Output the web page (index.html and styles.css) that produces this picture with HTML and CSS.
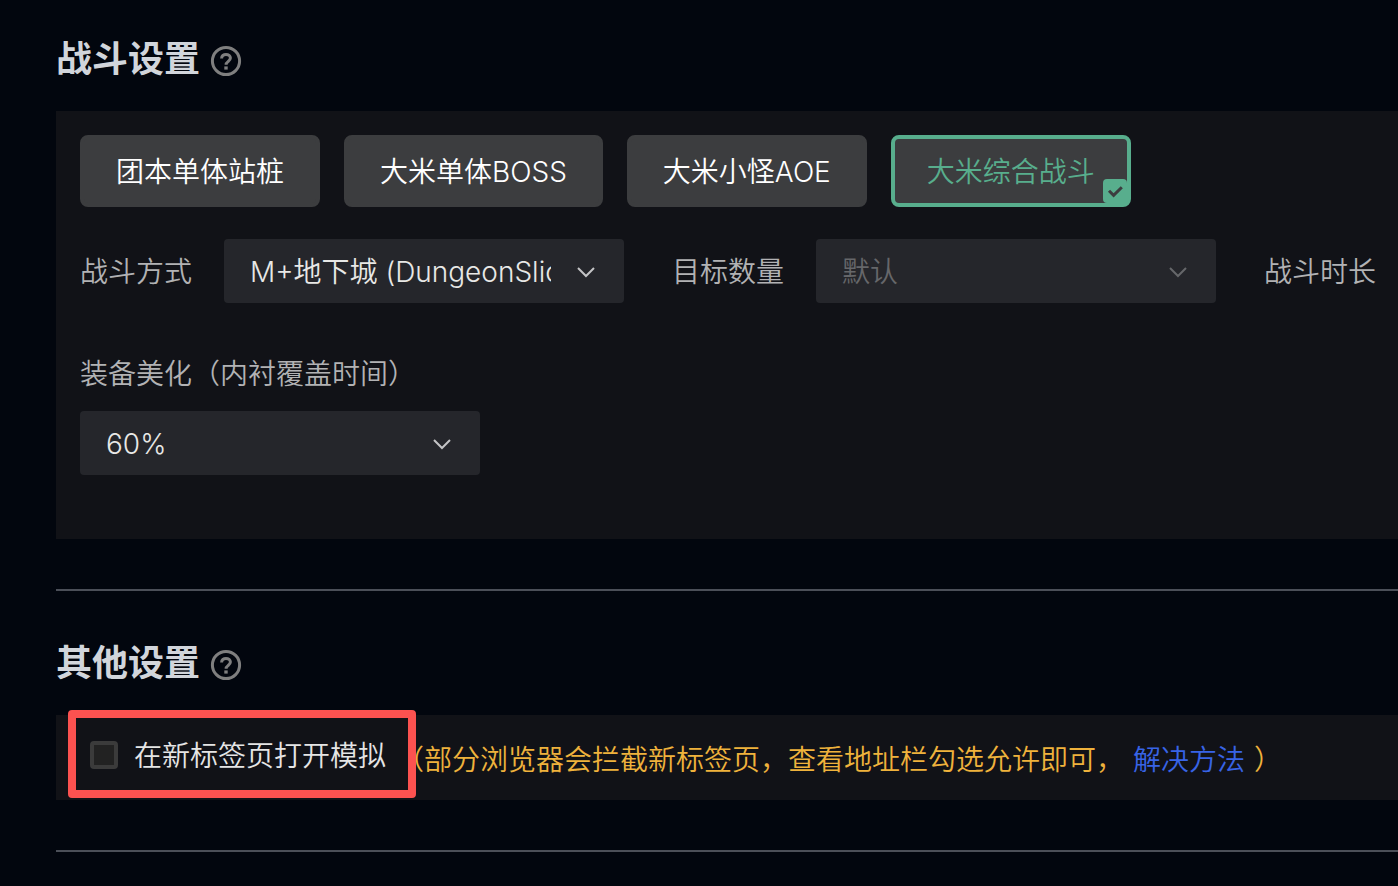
FILE: index.html
```html
<!DOCTYPE html>
<html lang="zh-CN">

<head>
    <meta charset="UTF-8">
    <meta name="viewport" content="width=device-width, initial-scale=1.0">
    <title>战斗设置</title>
    <link rel="stylesheet" href="styles.css">
</head>

<body>
    <main class="settings">
        <section class="section">
            <div class="section-title">
                <h2>战斗设置</h2>
                <svg class="help-icon" viewBox="0 0 32 32" aria-hidden="true">
                    <circle cx="16" cy="16" r="13.6" />
                    <path d="M11.6 13.4C11.6 10.9 13.5 9.4 16 9.4s4.4 1.5 4.4 3.7c0 1.8-1.2 2.6-2.4 3.5-1.1.8-1.9 1.4-1.9 3.2" />
                    <rect x="14.3" y="21.4" width="3.4" height="3.2" />
                </svg>
            </div>

            <div class="panel">
                <div class="preset-row">
                    <button type="button" class="preset">团本单体站桩</button>
                    <button type="button" class="preset">大米单体BOSS</button>
                    <button type="button" class="preset">大米小怪AOE</button>
                    <button type="button" class="preset active">大米综合战斗
                        <svg class="preset-check" viewBox="0 0 24 24" aria-hidden="true">
                            <path d="M6 11.8l4.6 4.5 8.2-8.1" />
                        </svg>
                    </button>
                </div>

                <div class="field-row">
                    <div class="field">
                        <label for="fightStyle">战斗方式</label>
                        <div class="select">
                            <select id="fightStyle">
                                <option>M+地下城 (DungeonSlice)</option>
                            </select>
                            <svg viewBox="0 0 20 12" aria-hidden="true"><path d="M2 2l8 8 8-8" /></svg>
                        </div>
                    </div>
                    <div class="field">
                        <label for="targetCount">目标数量</label>
                        <div class="select">
                            <select id="targetCount" disabled>
                                <option>默认</option>
                            </select>
                            <svg viewBox="0 0 20 12" aria-hidden="true"><path d="M2 2l8 8 8-8" /></svg>
                        </div>
                    </div>
                    <div class="field">
                        <span>战斗时长</span>
                    </div>
                </div>

                <div class="field-block">
                    <label for="uptime">装备美化（内衬覆盖时间）</label>
                    <div class="select">
                        <select id="uptime">
                            <option>60%</option>
                        </select>
                        <svg viewBox="0 0 20 12" aria-hidden="true"><path d="M2 2l8 8 8-8" /></svg>
                    </div>
                </div>
            </div>
        </section>

        <section class="section">
            <div class="section-title">
                <h2>其他设置</h2>
                <svg class="help-icon" viewBox="0 0 32 32" aria-hidden="true">
                    <circle cx="16" cy="16" r="13.6" />
                    <path d="M11.6 13.4C11.6 10.9 13.5 9.4 16 9.4s4.4 1.5 4.4 3.7c0 1.8-1.2 2.6-2.4 3.5-1.1.8-1.9 1.4-1.9 3.2" />
                    <rect x="14.3" y="21.4" width="3.4" height="3.2" />
                </svg>
            </div>

            <div class="panel option-row">
                <label class="new-tab" for="newTab">
                    <input type="checkbox" id="newTab"><span>在新标签页打开模拟</span>
                </label>
                <p class="hint">（部分浏览器会拦截新标签页，查看地址栏勾选允许即可，<a href="#">解决方法</a>）</p>
            </div>
        </section>
    </main>
</body>

</html>
```

FILE: styles.css
```css
* {
    box-sizing: border-box;
}

body {
    margin: 0;
    overflow-x: hidden;
    background-color: #02060e;
    color: #b2b2b4;
    font-family: Inter, "Noto Sans CJK SC", sans-serif;
    font-size: 28px;
    font-weight: 350;
    line-height: 40px;
}

.settings {
    padding: 37px 0 0 56px;
}

.section {
    padding-bottom: 50px;
    border-bottom: 2px solid #4b4f58;
}

.section + .section {
    padding-top: 50px;
}

.section-title {
    display: flex;
    align-items: center;
    gap: 10px;
    margin-bottom: 26px;
}

.section-title h2 {
    margin: 0;
    padding-bottom: 4px;
    color: #d1d5db;
    font-size: 36px;
    font-weight: 600;
    line-height: 44px;
}

.help-icon {
    width: 32px;
    height: 32px;
    fill: none;
    stroke: #7f7f7f;
    stroke-width: 3;
}

.help-icon rect {
    fill: #7f7f7f;
    stroke: none;
}

.panel {
    padding: 24px 0 64px 24px;
    background-color: #111217;
}

/* presets */
.preset-row {
    display: flex;
    gap: 24px;
    margin-bottom: 32px;
}

.preset {
    position: relative;
    height: 72px;
    padding: 2px 32px 0;
    border: 4px solid #3c3d3f;
    border-radius: 8px;
    background-color: #3c3d3f;
    color: #fff;
    font: inherit;
    white-space: nowrap;
}

.preset.active {
    border-color: #58ae8d;
    color: #58ae8d;
}

.preset-check {
    position: absolute;
    right: 0;
    bottom: 0;
    width: 24px;
    height: 24px;
    border-radius: 4px 4px 0 4px;
    background-color: #58ae8d;
    fill: none;
    stroke: #3c3d3f;
    stroke-width: 3;
}

/* fields */
.field-row {
    display: flex;
    gap: 48px;
    margin-bottom: 50px;
}

.field {
    display: flex;
    flex: none;
    align-items: center;
    gap: 32px;
}

.field label,
.field span {
    padding-top: 2px;
}

.field-block label {
    display: block;
    padding-top: 1px;
    margin-bottom: 17px;
}

.select {
    position: relative;
    width: 400px;
}

.select select {
    display: block;
    width: 100%;
    height: 64px;
    padding: 2px 73px 0 26px;
    border: 0;
    border-radius: 4px;
    appearance: none;
    background-color: #25262b;
    color: #e8e8e6;
    font: inherit;
}

.select select:disabled {
    color: #66676a;
    opacity: 1;
}

.select svg {
    position: absolute;
    top: 27px;
    right: 28px;
    width: 20px;
    height: 12px;
    fill: none;
    stroke: #c4c4c6;
    stroke-width: 2;
    pointer-events: none;
}

.select select:disabled + svg {
    stroke: #66676a;
}

/* other options */
.option-row {
    display: flex;
    align-items: flex-start;
    gap: 10px;
    padding: 19px 0 20px 34px;
}

.new-tab {
    position: relative;
    display: flex;
    flex: none;
    align-items: center;
    gap: 16px;
    color: #e5e5e5;
}

.new-tab span {
    padding-top: 2px;
}

.new-tab::after {
    content: "";
    position: absolute;
    inset: -24px -30px -22px -22px;
    border: 8px solid #fc5250;
    border-radius: 4px;
    pointer-events: none;
}

.new-tab input {
    width: 28px;
    height: 28px;
    margin: 0;
    border: 4px solid #3b3b3b;
    border-radius: 4px;
    appearance: none;
    background-color: #222;
}

.hint {
    margin: 6px 0 0;
    color: #efb23c;
    white-space: nowrap;
}

.hint a {
    margin: 0 9px;
    color: #3864e6;
    text-decoration: none;
}
```
